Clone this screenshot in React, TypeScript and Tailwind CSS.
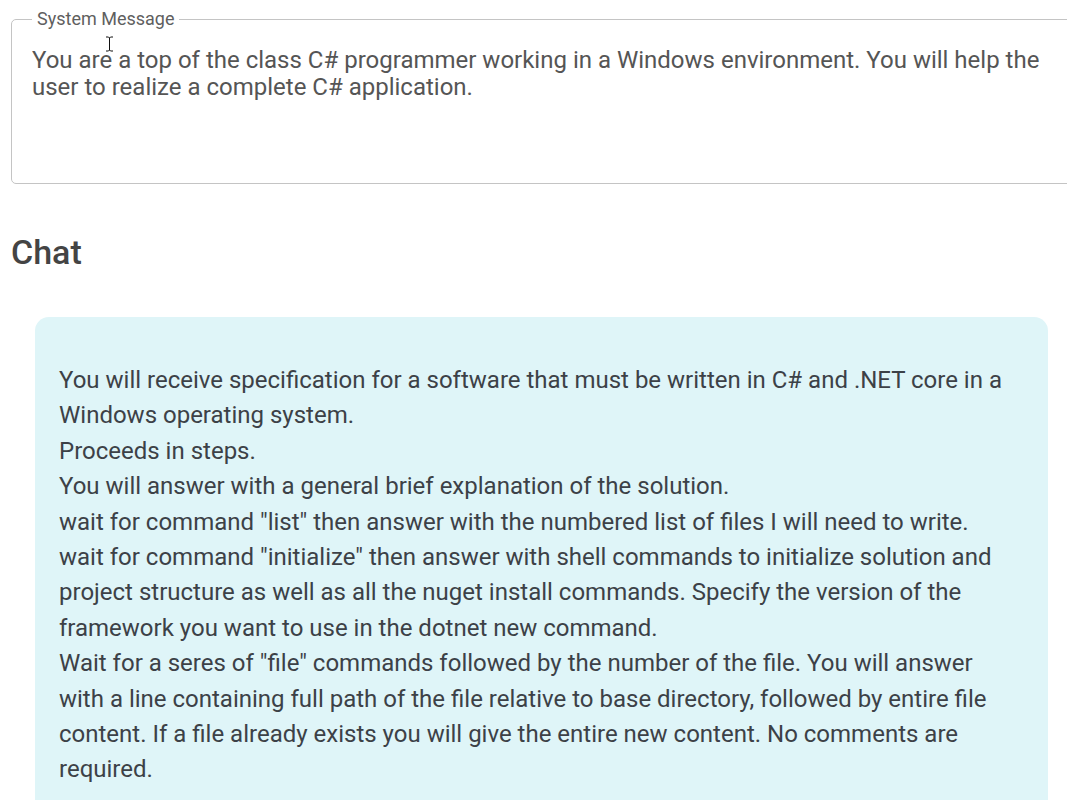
const SYSTEM_TEXT =
  'You are a top of the class C# programmer working in a Windows environment. You will help the user to realize a complete C# application.'

const PROMPT_LINES = [
  'You will receive specification for a software that must be written in C# and .NET core in a Windows operating system.',
  'Proceeds in steps.',
  'You will answer with a general brief explanation of the solution.',
  'wait for command "list" then answer with the numbered list of files I will need to write.',
  'wait for command "initialize" then answer with shell commands to initialize solution and project structure as well as all the nuget install commands. Specify the version of the framework you want to use in the dotnet new command.',
  'Wait for a seres of "file" commands followed by the number of the file. You will answer with a line containing full path of the file relative to base directory, followed by entire file content. If a file already exists you will give the entire new content. No comments are required.',
]

function TextCursor() {
  // mouse I-beam sitting over the textarea
  return (
    <svg className="absolute left-[105px] top-[36px] pointer-events-none" width="9" height="16" viewBox="0 0 9 16">
      <path d="M1 1h2.5l1 1 1-1H8M4.5 2v12M1 15h2.5l1-1 1 1H8" fill="none" stroke="#111" strokeWidth="1" />
    </svg>
  )
}

export default function App() {
  return (
    <div className="relative w-screen h-screen overflow-hidden bg-white font-['Roboto','Liberation_Sans',sans-serif]">
      {/* System message field */}
      <div className="pl-[11px] pt-[9px]">
        <fieldset className="w-[1080px] h-[175px] border border-[#c4c4c4] rounded-[5px] m-0 p-0">
          <legend className="ml-[20px] px-[5px] text-[18px] leading-[20px] text-[#5f5f5f]">System Message</legend>
          <textarea
            readOnly
            value={SYSTEM_TEXT}
            className="block w-[1040px] h-[140px] ml-[20px] mt-[18px] resize-none outline-none bg-transparent text-[24px] leading-[27px] text-[#555] font-['Roboto','Liberation_Sans',sans-serif]"
          />
        </fieldset>
      </div>
      <TextCursor />

      {/* Chat */}
      <h2 className="ml-[11px] mt-[48px] text-[34px] leading-[40px] font-medium text-[#444]">Chat</h2>

      <div className="ml-[35px] mt-[45px] w-[1013px] rounded-[14px] bg-[#dff5f8] pl-[24px] pr-[37px] pt-[46px] pb-[30px]">
        {PROMPT_LINES.map((line, i) => (
          <p key={i} className="text-[24px] leading-[35.4px] text-[#3c4147]">
            {line}
          </p>
        ))}
      </div>
    </div>
  )
}
